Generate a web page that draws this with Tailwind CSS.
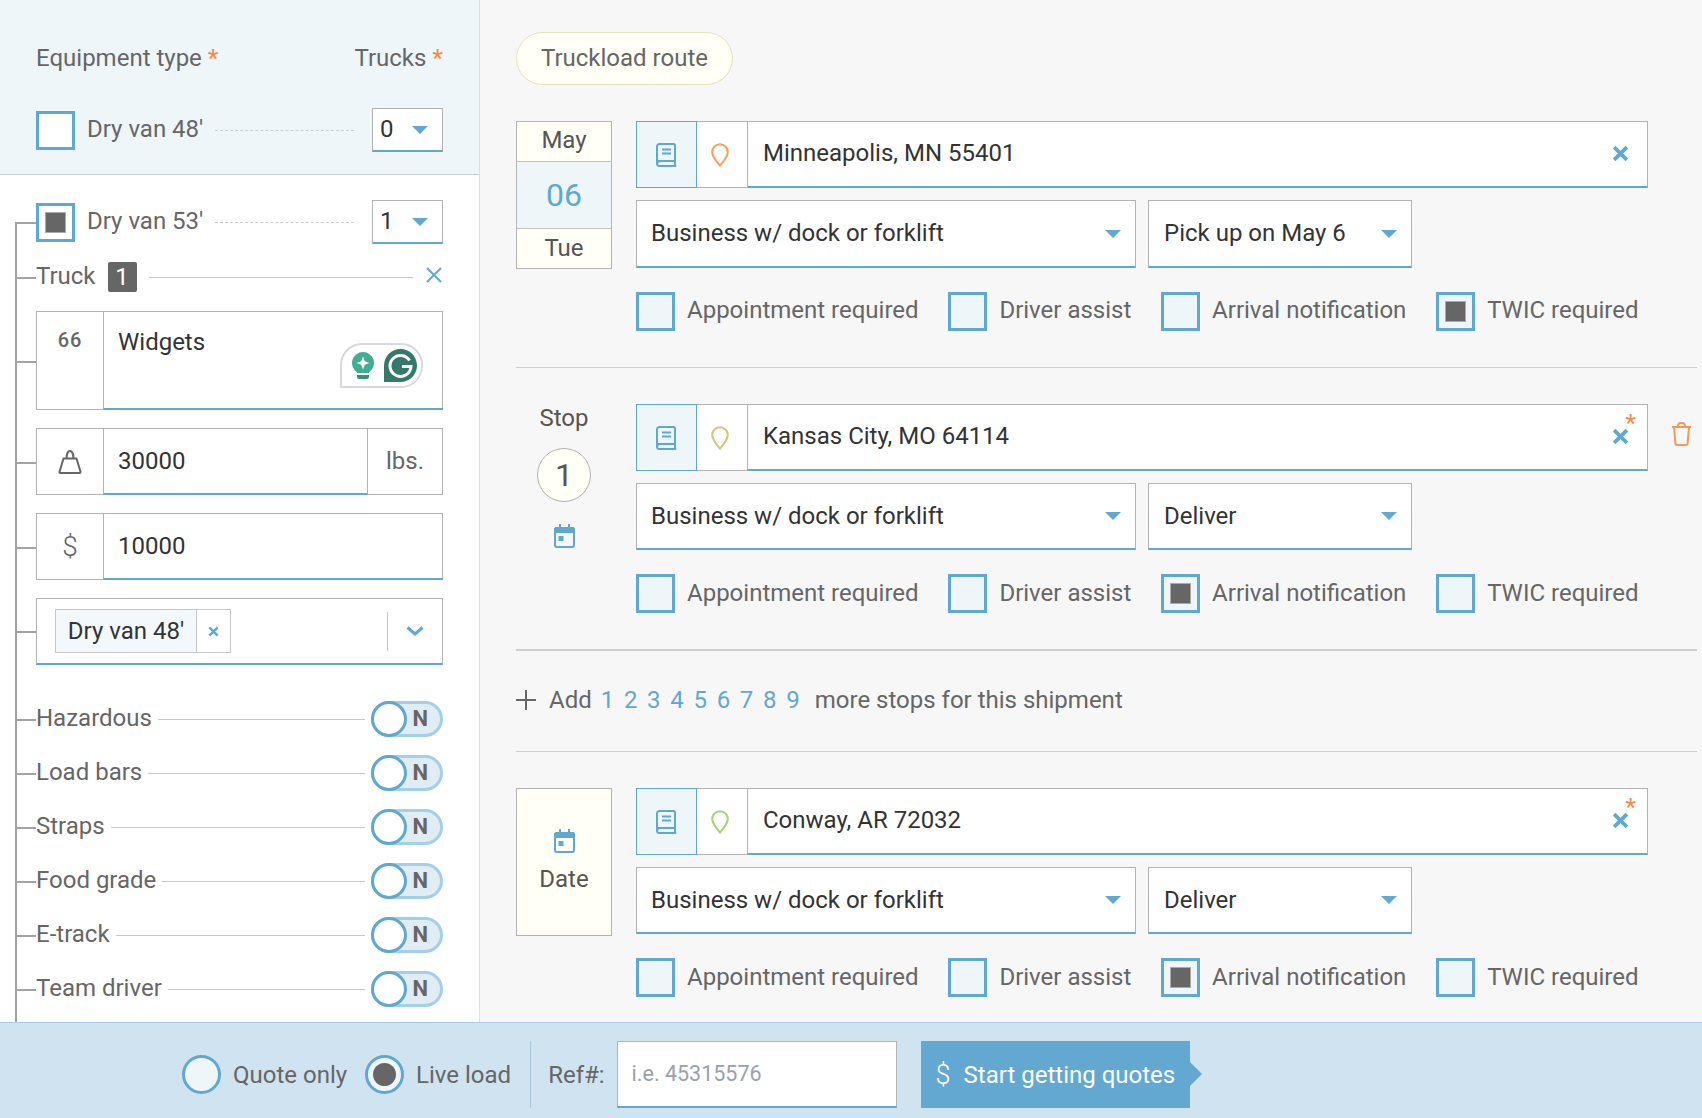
<!DOCTYPE html>
<html lang="en">
<head>
    <meta charset="UTF-8">
    <title>Truckload route</title>
    <script src="https://cdn.jsdelivr.net/npm/@tailwindcss/browser@4"></script>
</head>
<body class="[font-family:Roboto,sans-serif] text-[24px] leading-[28px] text-[#333] bg-white">
    <!-- shared icons -->
    <svg class="hidden">
        <symbol id="book" viewBox="0 0 21 24">
            <path d="M3.5 1h14a1.5 1.5 0 0 1 1.5 1.5V18H3.5A2.5 2.5 0 0 0 1 20.5V3.5A2.5 2.5 0 0 1 3.5 1z" fill="none" stroke="currentColor" stroke-width="2"/>
            <path d="M1 20.5A2.5 2.5 0 0 1 3.5 18H19v4.5l1 .5H3.5A2.5 2.5 0 0 1 1 20.5z" fill="none" stroke="currentColor" stroke-width="2"/>
            <path d="M6 6.5h9M6 10.5h9" stroke="currentColor" stroke-width="2"/>
        </symbol>
        <symbol id="pin" viewBox="0 0 18 24">
            <path d="M9 1.2a7.8 7.8 0 0 1 7.8 7.8c0 4.6-4.4 9.6-7.8 13.6C5.600 18.600 1.200 13.600 1.200 9A7.800 7.800 0 0 1 9 1.200z" fill="none" stroke="currentColor" stroke-width="2"/>
        </symbol>
        <symbol id="cal" viewBox="0 0 21 24">
            <path d="M5 0h2v3h7V0h2v3h2.500A2.500 2.500 0 0 1 21 5.500V9H0V5.500A2.500 2.500 0 0 1 2.500 3H5z" fill="currentColor"/>
            <rect x="1" y="4" width="19" height="19" rx="2" fill="none" stroke="currentColor" stroke-width="2"/>
            <rect x="4.500" y="12" width="5" height="5" fill="currentColor"/>
        </symbol>
        <symbol id="clear" viewBox="0 0 16 16">
            <path d="M2 2l12 12M14 2L2 14" fill="none" stroke="currentColor" stroke-width="3.500"/>
        </symbol>
    </svg>

    <div class="h-[1118px] flex flex-col overflow-hidden">
        <div class="flex-1 flex min-h-0">
            <!-- equipment column -->
            <aside class="w-[480px] shrink-0 flex flex-col border-r border-[#d5e2ea] text-[#666]">
                <div class="pt-[44px] pb-[22px] px-9 bg-[#eef6fa] border-b border-[#c9d1d6]">
                    <div class="flex justify-between">
                        <div>Equipment type <span class="text-[#f0904a] font-medium">*</span></div>
                        <div>Trucks <span class="text-[#f0904a] font-medium">*</span></div>
                    </div>
                    <div class="mt-[36px] flex items-center">
                        <div class="w-[39px] h-[39px] border-[3px] border-[#5fa8d0] bg-white"></div>
                        <div class="ml-3 pb-[2px]">Dry van 48'</div>
                        <div class="flex-1 ml-3 mr-[18px] border-t border-dashed border-[#ccc]"></div>
                        <div class="w-[71px] h-[44px] flex items-center justify-between pl-[7px] pr-[14px] bg-white border border-[#b3b3b3] border-b-2 border-b-[#5fa8d0] text-[#333]">
                            <span class="pb-[2px]">0</span>
                            <span class="w-0 h-0 border-x-[8px] border-x-transparent border-t-[8px] border-t-[#5fa8d0]"></span>
                        </div>
                    </div>
                </div>

                <div class="relative flex-1 pt-[25px] px-9 overflow-hidden">
                    <div class="absolute left-[15px] top-[47px] bottom-0 w-[2px] bg-[#a3a3a3]"></div>

                    <div class="relative flex items-center before:absolute before:left-[-19px] before:top-1/2 before:w-[19px] before:h-[2px] before:bg-[#a3a3a3]">
                        <div class="w-[39px] h-[39px] p-[6px] border-[3px] border-[#5fa8d0]"><div class="w-full h-full bg-[#666] border border-[#aaa]"></div></div>
                        <div class="ml-3 pb-[2px]">Dry van 53'</div>
                        <div class="flex-1 ml-3 mr-[18px] border-t border-dashed border-[#ccc]"></div>
                        <div class="w-[71px] h-[44px] flex items-center justify-between pl-[7px] pr-[14px] bg-white border border-[#b3b3b3] border-b-2 border-b-[#5fa8d0] text-[#333]">
                            <span class="pb-[2px]">1</span>
                            <span class="w-0 h-0 border-x-[8px] border-x-transparent border-t-[8px] border-t-[#5fa8d0]"></span>
                        </div>
                    </div>

                    <div class="relative mt-[18px] h-[30px] flex items-center before:absolute before:left-[-19px] before:top-1/2 before:w-[19px] before:h-[2px] before:bg-[#a3a3a3]">
                        <span class="pb-[2px]">Truck</span>
                        <span class="ml-3 w-[29px] h-[30px] flex items-center justify-center rounded-[2px] bg-[#666] text-white">1</span>
                        <div class="flex-1 ml-3 mr-[13px] border-t border-[#c8c8c8]"></div>
                        <svg class="w-4 h-4 mb-1 mr-px text-[#5fa8d0]" viewBox="0 0 16 16"><path d="M1 1l14 14M15 1L1 15" fill="none" stroke="currentColor" stroke-width="2"/></svg>
                    </div>

                    <div class="relative mt-[19px] h-[99px] flex border border-[#b3b3b3] before:absolute before:left-[-20px] before:top-1/2 before:w-[19px] before:h-[2px] before:bg-[#a3a3a3]">
                        <div class="w-[66px] pt-[14px] text-center text-[20px] font-medium tracking-[1px]">66</div>
                        <div class="relative flex-1 -mb-px -mr-px pl-[14px] pt-[16px] border-l border-l-[#b3b3b3] border-b-2 border-b-[#5fa8d0] text-[#333]">
                            Widgets
                            <!-- grammarly badge -->
                            <div class="absolute left-[236px] top-[31px] w-[83px] h-[45px] flex items-center gap-[10px] pl-[10px] border-2 border-[#d6d8e2] rounded-[22px] rounded-bl-none bg-white">
                                <svg class="w-[22px] h-[28px]" viewBox="0 0 22 28">
                                    <path d="M11 0a11 11 0 0 1 6 20.200V21H5v-.800A11 11 0 0 1 11 0z" fill="#3fae93"/>
                                    <path d="M11 4.500l1.800 4.700 4.700 1.800-4.700 1.800L11 17.500l-1.800-4.700L4.500 11l4.700-1.800z" fill="#fff"/>
                                    <path d="M5 23h12v1.500a2.500 2.500 0 0 1-2.500 2.500h-7A2.500 2.500 0 0 1 5 24.500z" fill="#3a8f7c"/>
                                </svg>
                                <svg class="w-[33px] h-[33px]" viewBox="0 0 33 33">
                                    <path d="M16.500 0A16.500 16.500 0 1 1 16.500 33H0V16.500A16.500 16.500 0 0 1 16.500 0z" fill="#35796b"/>
                                    <path d="M25.500 11.500A10.500 10.500 0 1 0 27 17.500H18" fill="none" stroke="#fff" stroke-width="3"/>
                                </svg>
                            </div>
                        </div>
                    </div>

                    <div class="relative mt-[18px] h-[67px] flex border border-[#b3b3b3] before:absolute before:left-[-20px] before:top-1/2 before:w-[19px] before:h-[2px] before:bg-[#a3a3a3]">
                        <div class="w-[66px] flex items-center justify-center">
                            <svg class="w-[24px] h-[24px]" viewBox="0 0 24 24"><path d="M5.500 8.500h13l4 13.200a1 1 0 0 1-1 1.300H2.500a1 1 0 0 1-1-1.300z" fill="none" stroke="#666" stroke-width="2" stroke-linejoin="round"/><path d="M8.500 8.500C8.500 3 10.500 1 12 1s3.500 2 3.500 7.500" fill="none" stroke="#666" stroke-width="2"/></svg>
                        </div>
                        <div class="flex-1 -mb-px flex items-center pl-[14px] border-x border-x-[#b3b3b3] border-b-2 border-b-[#5fa8d0] text-[#333]">30000</div>
                        <div class="w-[74px] flex items-center justify-center pb-[2px]">lbs.</div>
                    </div>

                    <div class="relative mt-[18px] h-[67px] flex border border-[#b3b3b3] before:absolute before:left-[-20px] before:top-1/2 before:w-[19px] before:h-[2px] before:bg-[#a3a3a3]">
                        <div class="w-[66px] flex items-center justify-center font-light text-[28px]">$</div>
                        <div class="flex-1 -mb-px -mr-px flex items-center pl-[14px] border-l border-l-[#b3b3b3] border-b-2 border-b-[#5fa8d0] text-[#333]">10000</div>
                    </div>

                    <div class="relative mt-[18px] h-[67px] flex items-center pl-[18px] pr-[18px] border border-[#b3b3b3] border-b-2 border-b-[#5fa8d0] before:absolute before:left-[-20px] before:top-1/2 before:w-[19px] before:h-[2px] before:bg-[#a3a3a3]">
                        <div class="flex h-[44px] border border-[#c8c8c8]">
                            <div class="w-[140px] flex items-center justify-center bg-[#f2f8fc] text-[#333]">Dry van 48'</div>
                            <div class="w-[34px] flex items-center justify-center border-l border-[#c8c8c8]">
                                <svg class="w-[11px] h-[11px] text-[#5fa8d0]" viewBox="0 0 16 16"><use href="#clear"/></svg>
                            </div>
                        </div>
                        <div class="ml-auto h-[39px] border-l border-[#c8c8c8]"></div>
                        <svg class="ml-[18px] w-[18px] h-[10px] text-[#5fa8d0]" viewBox="0 0 18 10"><path d="M1.500 1.500L9 8l7.500-6.500" fill="none" stroke="currentColor" stroke-width="3"/></svg>
                    </div>

                    <div class="mt-9 flex flex-col gap-[18px]">
                        <div class="relative h-[36px] flex items-center before:absolute before:left-[-19px] before:top-1/2 before:w-[19px] before:h-[2px] before:bg-[#a3a3a3]">
                            <span class="pb-[2px]">Hazardous</span>
                            <div class="flex-1 ml-[6px] mr-[6px] border-t border-[#c8c8c8]"></div>
                            <div class="relative w-[72px] h-[36px] rounded-full bg-[#e0edf4] border-[3px] border-[#a3d0e8] text-right pr-[12px] text-[22px] leading-[30px] font-bold">N<div class="absolute -left-[3px] -top-[3px] w-[36px] h-[36px] rounded-full bg-white border-[3px] border-[#5fa8d0]"></div></div>
                        </div>
                        <div class="relative h-[36px] flex items-center before:absolute before:left-[-19px] before:top-1/2 before:w-[19px] before:h-[2px] before:bg-[#a3a3a3]">
                            <span class="pb-[2px]">Load bars</span>
                            <div class="flex-1 ml-[6px] mr-[6px] border-t border-[#c8c8c8]"></div>
                            <div class="relative w-[72px] h-[36px] rounded-full bg-[#e0edf4] border-[3px] border-[#a3d0e8] text-right pr-[12px] text-[22px] leading-[30px] font-bold">N<div class="absolute -left-[3px] -top-[3px] w-[36px] h-[36px] rounded-full bg-white border-[3px] border-[#5fa8d0]"></div></div>
                        </div>
                        <div class="relative h-[36px] flex items-center before:absolute before:left-[-19px] before:top-1/2 before:w-[19px] before:h-[2px] before:bg-[#a3a3a3]">
                            <span class="pb-[2px]">Straps</span>
                            <div class="flex-1 ml-[6px] mr-[6px] border-t border-[#c8c8c8]"></div>
                            <div class="relative w-[72px] h-[36px] rounded-full bg-[#e0edf4] border-[3px] border-[#a3d0e8] text-right pr-[12px] text-[22px] leading-[30px] font-bold">N<div class="absolute -left-[3px] -top-[3px] w-[36px] h-[36px] rounded-full bg-white border-[3px] border-[#5fa8d0]"></div></div>
                        </div>
                        <div class="relative h-[36px] flex items-center before:absolute before:left-[-19px] before:top-1/2 before:w-[19px] before:h-[2px] before:bg-[#a3a3a3]">
                            <span class="pb-[2px]">Food grade</span>
                            <div class="flex-1 ml-[6px] mr-[6px] border-t border-[#c8c8c8]"></div>
                            <div class="relative w-[72px] h-[36px] rounded-full bg-[#e0edf4] border-[3px] border-[#a3d0e8] text-right pr-[12px] text-[22px] leading-[30px] font-bold">N<div class="absolute -left-[3px] -top-[3px] w-[36px] h-[36px] rounded-full bg-white border-[3px] border-[#5fa8d0]"></div></div>
                        </div>
                        <div class="relative h-[36px] flex items-center before:absolute before:left-[-19px] before:top-1/2 before:w-[19px] before:h-[2px] before:bg-[#a3a3a3]">
                            <span class="pb-[2px]">E-track</span>
                            <div class="flex-1 ml-[6px] mr-[6px] border-t border-[#c8c8c8]"></div>
                            <div class="relative w-[72px] h-[36px] rounded-full bg-[#e0edf4] border-[3px] border-[#a3d0e8] text-right pr-[12px] text-[22px] leading-[30px] font-bold">N<div class="absolute -left-[3px] -top-[3px] w-[36px] h-[36px] rounded-full bg-white border-[3px] border-[#5fa8d0]"></div></div>
                        </div>
                        <div class="relative h-[36px] flex items-center before:absolute before:left-[-19px] before:top-1/2 before:w-[19px] before:h-[2px] before:bg-[#a3a3a3]">
                            <span class="pb-[2px]">Team driver</span>
                            <div class="flex-1 ml-[6px] mr-[6px] border-t border-[#c8c8c8]"></div>
                            <div class="relative w-[72px] h-[36px] rounded-full bg-[#e0edf4] border-[3px] border-[#a3d0e8] text-right pr-[12px] text-[22px] leading-[30px] font-bold">N<div class="absolute -left-[3px] -top-[3px] w-[36px] h-[36px] rounded-full bg-white border-[3px] border-[#5fa8d0]"></div></div>
                        </div>
                    </div>
                </div>
            </aside>

            <!-- route column -->
            <main class="flex-1 min-w-0 pt-8 pl-9 pr-[5px] bg-[#f7f7f7] overflow-hidden">
                <div class="w-fit h-[53px] px-[24px] pb-[2px] flex items-center rounded-full border border-[#e6e2b8] bg-[#fffff6] text-[#666]">Truckload route</div>

                <!-- origin -->
                <div class="mt-9 pb-9 flex gap-6 border-b border-[#cfcfcf]">
                    <div class="w-[96px] h-[148px] flex flex-col border border-[#b3b3b3] bg-[#fffff6] text-center text-[#555]">
                        <div class="h-[39px] leading-[37px]">May</div>
                        <div class="h-[68px] flex items-center justify-center border-y border-[#c4c4c4] bg-[#eef6fa] text-[32px] text-[#5fa8d0]">06</div>
                        <div class="flex-1 leading-[38px]">Tue</div>
                    </div>
                    <div class="w-[1012px]">
                        <div class="flex h-[67px]">
                            <div class="w-[61px] flex items-center justify-center border border-[#5fa8d0] bg-[#eef6fa] text-[#5fa8d0]"><svg class="w-[21px] h-6"><use href="#book"/></svg></div>
                            <div class="w-[51px] pr-1 flex items-center justify-center border-y border-r border-[#b3b3b3] bg-white text-[#f2a25e]"><svg class="w-[18px] h-6"><use href="#pin"/></svg></div>
                            <div class="relative flex-1 flex items-center pl-[15px] pb-[2px] bg-white border-t border-r border-[#b3b3b3] border-b-2 border-b-[#5fa8d0]">
                                Minneapolis, MN 55401
                                <svg class="absolute right-[18px] top-[23px] w-[17px] h-[17px] text-[#5fa8d0]"><use href="#clear"/></svg>
                            </div>
                        </div>
                        <div class="mt-3 flex gap-3">
                            <div class="w-[500px] h-[68px] flex items-center justify-between pl-[14px] pr-[14px] bg-white border border-[#b3b3b3] border-b-2 border-b-[#5fa8d0]">
                                <span class="pb-[2px]">Business w/ dock or forklift</span>
                                <span class="w-0 h-0 border-x-[8px] border-x-transparent border-t-[8px] border-t-[#5fa8d0]"></span>
                            </div>
                            <div class="w-[264px] h-[68px] flex items-center justify-between pl-[15px] pr-[14px] bg-white border border-[#b3b3b3] border-b-2 border-b-[#5fa8d0]">
                                <span class="pb-[2px]">Pick up on May 6</span>
                                <span class="w-0 h-0 border-x-[8px] border-x-transparent border-t-[8px] border-t-[#5fa8d0]"></span>
                            </div>
                        </div>
                        <div class="mt-6 flex gap-[29.800px] text-[#666]">
                            <div class="flex items-center gap-3"><div class="w-[39px] h-[39px] border-[3px] border-[#5fa8d0] bg-[#eef6fa]"></div><span class="pb-1">Appointment required</span></div>
                            <div class="flex items-center gap-3"><div class="w-[39px] h-[39px] border-[3px] border-[#5fa8d0] bg-[#eef6fa]"></div><span class="pb-1">Driver assist</span></div>
                            <div class="flex items-center gap-3"><div class="w-[39px] h-[39px] border-[3px] border-[#5fa8d0] bg-[#eef6fa]"></div><span class="pb-1">Arrival notification</span></div>
                            <div class="flex items-center gap-3"><div class="w-[39px] h-[39px] p-[6px] border-[3px] border-[#5fa8d0] bg-[#eef6fa]"><div class="w-full h-full bg-[#666] border border-[#aaa]"></div></div><span class="pb-1">TWIC required</span></div>
                        </div>
                    </div>
                </div>

                <!-- stop 1 -->
                <div class="pt-9 pb-9 flex gap-6 border-b-2 border-[#cfcfcf]">
                    <div class="w-[96px] flex flex-col items-center text-[#555]">
                        <div>Stop</div>
                        <div class="mt-[16px] w-[54px] h-[54px] flex items-center justify-center rounded-full border border-[#b3b3b3] bg-[#fffff6] text-[32px]">1</div>
                        <svg class="mt-[22px] w-[21px] h-6 text-[#5fa8d0]"><use href="#cal"/></svg>
                    </div>
                    <div class="w-[1012px]">
                        <div class="flex h-[67px]">
                            <div class="w-[61px] flex items-center justify-center border border-[#5fa8d0] bg-[#eef6fa] text-[#5fa8d0]"><svg class="w-[21px] h-6"><use href="#book"/></svg></div>
                            <div class="w-[51px] pr-1 flex items-center justify-center border-y border-r border-[#b3b3b3] bg-white text-[#d3c679]"><svg class="w-[18px] h-6"><use href="#pin"/></svg></div>
                            <div class="relative flex-1 flex items-center pl-[15px] pb-[2px] bg-white border-t border-r border-[#b3b3b3] border-b-2 border-b-[#5fa8d0]">
                                Kansas City, MO 64114
                                <svg class="absolute right-[18px] top-[23px] w-[17px] h-[17px] text-[#5fa8d0]"><use href="#clear"/></svg>
                                <span class="absolute right-[11px] top-[4px] text-[#f0904a] font-medium">*</span>
                            </div>
                        </div>
                        <div class="mt-3 flex gap-3">
                            <div class="w-[500px] h-[67px] flex items-center justify-between pl-[14px] pr-[14px] bg-white border border-[#b3b3b3] border-b-2 border-b-[#5fa8d0]">
                                <span>Business w/ dock or forklift</span>
                                <span class="w-0 h-0 border-x-[8px] border-x-transparent border-t-[8px] border-t-[#5fa8d0]"></span>
                            </div>
                            <div class="w-[264px] h-[67px] flex items-center justify-between pl-[15px] pr-[14px] bg-white border border-[#b3b3b3] border-b-2 border-b-[#5fa8d0]">
                                <span>Deliver</span>
                                <span class="w-0 h-0 border-x-[8px] border-x-transparent border-t-[8px] border-t-[#5fa8d0]"></span>
                            </div>
                        </div>
                        <div class="mt-[24px] flex gap-[29.800px] text-[#666]">
                            <div class="flex items-center gap-3"><div class="w-[39px] h-[39px] border-[3px] border-[#5fa8d0] bg-[#eef6fa]"></div><span class="pb-[2px]">Appointment required</span></div>
                            <div class="flex items-center gap-3"><div class="w-[39px] h-[39px] border-[3px] border-[#5fa8d0] bg-[#eef6fa]"></div><span class="pb-[2px]">Driver assist</span></div>
                            <div class="flex items-center gap-3"><div class="w-[39px] h-[39px] p-[6px] border-[3px] border-[#5fa8d0] bg-[#eef6fa]"><div class="w-full h-full bg-[#666] border border-[#aaa]"></div></div><span class="pb-[2px]">Arrival notification</span></div>
                            <div class="flex items-center gap-3"><div class="w-[39px] h-[39px] border-[3px] border-[#5fa8d0] bg-[#eef6fa]"></div><span class="pb-[2px]">TWIC required</span></div>
                        </div>
                    </div>
                    <svg class="-ml-px mt-[18px] w-[21px] h-6 text-[#f29a5a]" viewBox="0 0 21 24"><path d="M1 5h19M7 5V3.500A2.500 2.500 0 0 1 9.500 1h2A2.500 2.500 0 0 1 14 3.500V5M3 5l1.500 17a1.500 1.500 0 0 0 1.500 1h9a1.500 1.500 0 0 0 1.500-1L18 5" fill="none" stroke="currentColor" stroke-width="2"/></svg>
                </div>

                <!-- add stops -->
                <div class="h-[101px] pb-[2px] flex items-center border-b border-[#cfcfcf] text-[#666]">
                    <svg class="w-5 h-5" viewBox="0 0 20 20"><path d="M10 0v20M0 10h20" stroke="#666" stroke-width="2"/></svg>
                    <span class="ml-[13px]">Add</span>
                    <div class="ml-[9px] flex gap-[9.700px] text-[#5fa8d0]">
                        <span>1</span><span>2</span><span>3</span><span>4</span><span>5</span><span>6</span><span>7</span><span>8</span><span>9</span>
                    </div>
                    <span class="ml-[15px]">more stops for this shipment</span>
                </div>

                <!-- destination -->
                <div class="pt-9 flex gap-6">
                    <div class="w-[96px] h-[148px] pb-[2px] flex flex-col items-center justify-center border border-[#b3b3b3] bg-[#fffff6] text-[#555]">
                        <svg class="w-[21px] h-6 text-[#5fa8d0]"><use href="#cal"/></svg>
                        <div class="mt-[12px]">Date</div>
                    </div>
                    <div class="w-[1012px]">
                        <div class="flex h-[67px]">
                            <div class="w-[61px] flex items-center justify-center border border-[#5fa8d0] bg-[#eef6fa] text-[#5fa8d0]"><svg class="w-[21px] h-6"><use href="#book"/></svg></div>
                            <div class="w-[51px] pr-1 flex items-center justify-center border-y border-r border-[#b3b3b3] bg-white text-[#a9d274]"><svg class="w-[18px] h-6"><use href="#pin"/></svg></div>
                            <div class="relative flex-1 flex items-center pl-[15px] pb-[2px] bg-white border-t border-r border-[#b3b3b3] border-b-2 border-b-[#5fa8d0]">
                                Conway, AR 72032
                                <svg class="absolute right-[18px] top-[23px] w-[17px] h-[17px] text-[#5fa8d0]"><use href="#clear"/></svg>
                                <span class="absolute right-[11px] top-[4px] text-[#f0904a] font-medium">*</span>
                            </div>
                        </div>
                        <div class="mt-3 flex gap-3">
                            <div class="w-[500px] h-[67px] flex items-center justify-between pl-[14px] pr-[14px] bg-white border border-[#b3b3b3] border-b-2 border-b-[#5fa8d0]">
                                <span>Business w/ dock or forklift</span>
                                <span class="w-0 h-0 border-x-[8px] border-x-transparent border-t-[8px] border-t-[#5fa8d0]"></span>
                            </div>
                            <div class="w-[264px] h-[67px] flex items-center justify-between pl-[15px] pr-[14px] bg-white border border-[#b3b3b3] border-b-2 border-b-[#5fa8d0]">
                                <span>Deliver</span>
                                <span class="w-0 h-0 border-x-[8px] border-x-transparent border-t-[8px] border-t-[#5fa8d0]"></span>
                            </div>
                        </div>
                        <div class="mt-[24px] flex gap-[29.800px] text-[#666]">
                            <div class="flex items-center gap-3"><div class="w-[39px] h-[39px] border-[3px] border-[#5fa8d0] bg-[#eef6fa]"></div><span class="pb-[2px]">Appointment required</span></div>
                            <div class="flex items-center gap-3"><div class="w-[39px] h-[39px] border-[3px] border-[#5fa8d0] bg-[#eef6fa]"></div><span class="pb-[2px]">Driver assist</span></div>
                            <div class="flex items-center gap-3"><div class="w-[39px] h-[39px] p-[6px] border-[3px] border-[#5fa8d0] bg-[#eef6fa]"><div class="w-full h-full bg-[#666] border border-[#aaa]"></div></div><span class="pb-[2px]">Arrival notification</span></div>
                            <div class="flex items-center gap-3"><div class="w-[39px] h-[39px] border-[3px] border-[#5fa8d0] bg-[#eef6fa]"></div><span class="pb-[2px]">TWIC required</span></div>
                        </div>
                    </div>
                </div>
            </main>
        </div>

        <!-- footer bar -->
        <footer class="h-[96px] shrink-0 pt-[8px] flex items-center pl-[182px] bg-[#d0e3f1] border-t border-[#a5cfe8] text-[#666]">
            <div class="w-[39px] h-[39px] rounded-full border-[3px] border-[#5fa8d0] bg-[#eef6fa]"></div>
            <span class="ml-3">Quote only</span>
            <div class="ml-[18px] w-[39px] h-[39px] p-[5px] rounded-full border-[3px] border-[#5fa8d0] bg-[#eef6fa]"><div class="w-full h-full rounded-full bg-[#666]"></div></div>
            <span class="ml-3">Live load</span>
            <div class="ml-[19px] h-[67px] border-l border-[#a5c8e0]"></div>
            <span class="ml-[17px]">Ref#:</span>
            <div class="ml-3 w-[280px] h-[67px] flex items-center pl-[14px] bg-white border border-[#b3b3b3] border-b-2 border-b-[#5fa8d0] text-[21.500px] text-[#9aa1aa]">i.e. 45315576</div>
            <div class="relative ml-6 w-[269px] h-[67px] flex items-center pl-[15px] bg-[#62a8d0] text-white after:absolute after:left-full after:top-[21px] after:border-y-[12px] after:border-y-transparent after:border-l-[12px] after:border-l-[#62a8d0]">
                <span class="font-light text-[27px]">$</span>
                <span class="ml-[13px]">Start getting quotes</span>
            </div>
        </footer>
    </div>
</body>
</html>
